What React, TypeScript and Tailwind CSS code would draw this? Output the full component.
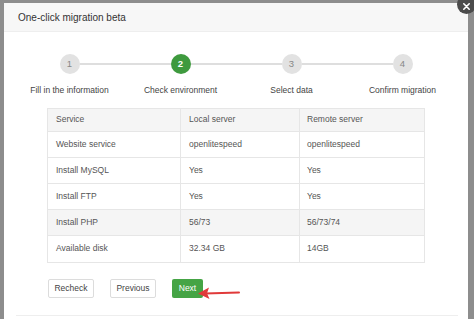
const steps = ['Fill in the information', 'Check environment', 'Select data', 'Confirm migration']

const rows = [
  { name: 'Website service', local: 'openlitespeed', remote: 'openlitespeed', alt: false },
  { name: 'Install MySQL', local: 'Yes', remote: 'Yes', alt: false },
  { name: 'Install FTP', local: 'Yes', remote: 'Yes', alt: false },
  { name: 'Install PHP', local: '56/73', remote: '56/73/74', alt: true },
  { name: 'Available disk', local: '32.34 GB', remote: '14GB', alt: false },
]

export default function App() {
  return (
    <div
      className="w-[474px] h-[319px] overflow-hidden bg-[#8d8d8d] pt-[3px] pl-[4px]"
      style={{ fontFamily: '"Liberation Sans", Arial, sans-serif' }}
    >
      <div className="relative w-[464px] h-[316px] bg-white">
        {/* Close */}
        <div className="absolute -right-[8px] -top-[8px] w-[19px] h-[19px] rounded-full bg-[#4b4b4b] flex items-center justify-center">
          <svg width="9" height="9" viewBox="0 0 10 10" className="mt-[4px] -ml-[1px]">
            <path d="M2 2 L8 8 M8 2 L2 8" stroke="white" strokeWidth="1.8" strokeLinecap="round" />
          </svg>
        </div>

        {/* Header */}
        <div className="h-[29px] bg-[#f7f7f7] border-b border-[#eeeeee] flex items-center pl-[14px]">
          <span className="text-[10px] text-[#333]">One-click migration beta</span>
        </div>

        {/* Steps */}
        <div className="grid grid-cols-4 px-[10px] pt-[22px]">
          {steps.map((s, i) => (
            <div key={s} className="flex flex-col items-center">
              <div className="flex items-center w-full">
                <div className={`flex-1 h-[2px] ${i === 0 ? 'bg-transparent' : 'bg-[#dedede]'}`} />
                <div
                  className={`w-[20px] h-[20px] rounded-full flex items-center justify-center text-[9.5px] ${
                    i === 1 ? 'bg-[#3e9a3e] text-white font-bold' : 'bg-[#e2e2e2] text-[#888]'
                  }`}
                >
                  {i + 1}
                </div>
                <div className={`flex-1 h-[2px] ${i === 3 ? 'bg-transparent' : 'bg-[#dedede]'}`} />
              </div>
              <div className="mt-[10px] text-[8.5px] text-[#444] whitespace-nowrap">{s}</div>
            </div>
          ))}
        </div>

        {/* Table */}
        <div className="mx-[43px] mt-[11px] border border-[#e6e6e6] text-[8.5px] text-[#555]">
          <div className="grid grid-cols-[133px_119px_1fr] h-[23px] bg-[#f5f5f5] border-b border-[#e6e6e6]">
            <div className="flex items-center pl-[8px] border-r border-[#e6e6e6]">Service</div>
            <div className="flex items-center pl-[8px] border-r border-[#e6e6e6]">Local server</div>
            <div className="flex items-center pl-[7px]">Remote server</div>
          </div>
          {rows.map((r, i) => (
            <div
              key={r.name}
              className={`grid grid-cols-[133px_119px_1fr] h-[26px] ${r.alt ? 'bg-[#f5f5f5]' : 'bg-white'} ${
                i < rows.length - 1 ? 'border-b border-[#e6e6e6]' : ''
              }`}
            >
              <div className="flex items-center pl-[8px] border-r border-[#e6e6e6]">{r.name}</div>
              <div className="flex items-center pl-[8px] border-r border-[#e6e6e6]">{r.local}</div>
              <div className="flex items-center pl-[7px]">{r.remote}</div>
            </div>
          ))}
        </div>

        {/* Buttons */}
        <div className="flex items-center gap-[16px] ml-[44px] mt-[14px] text-[8.5px]">
          <button className="h-[19px] w-[46px] border border-[#dcdcdc] rounded-[2px] bg-white text-[#444]">Recheck</button>
          <button className="h-[19px] w-[46px] border border-[#dcdcdc] rounded-[2px] bg-white text-[#444]">Previous</button>
          <div className="flex items-center">
            <button className="h-[19px] w-[31px] rounded-[2px] bg-[#45a445] text-white">Next</button>
            <svg width="44" height="14" viewBox="0 0 44 14" className="-ml-[6px] mt-[9px]">
              <path d="M42 6.5 L8 7.5" stroke="#e03a3a" strokeWidth="2" strokeLinecap="round" />
              <path d="M1 7.5 L12 1.5 L10 7.3 L12.5 13 Z" fill="#e03a3a" />
            </svg>
          </div>
        </div>

        {/* Footer line */}
        <div className="absolute left-[12px] right-[10px] top-[312px] h-px bg-[#eeeeee]" />
      </div>
    </div>
  )
}
